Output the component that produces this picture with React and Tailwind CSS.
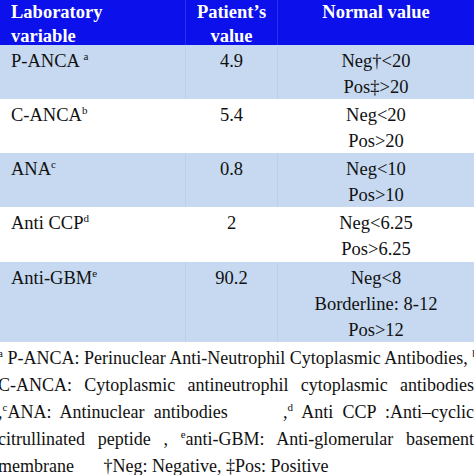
import React from 'react';

const rows = [
  { name: 'P-ANCA', gap: true, sup: 'a', value: '4.9', normal: ['Neg†<20', 'Pos‡>20'], blue: true, h: 'h-[54px]' },
  { name: 'C-ANCA', sup: 'b', value: '5.4', normal: ['Neg<20', 'Pos>20'], h: 'h-[54px]' },
  { name: 'ANA', sup: 'c', value: '0.8', normal: ['Neg<10', 'Pos>10'], blue: true, h: 'h-[54px]' },
  { name: 'Anti CCP', sup: 'd', value: '2', normal: ['Neg<6.25', 'Pos>6.25'], h: 'h-[55px]' },
  { name: 'Anti-GBM', sup: 'e', value: '90.2', normal: ['Neg<8', 'Borderline: 8-12', 'Pos>12'], blue: true, h: 'h-[80px]' },
];

function Sup({ children }) {
  return <sup className="text-[11px] top-[-7px]">{children}</sup>;
}

export default function App() {
  return (
    <div className="w-[474px] h-[475px] overflow-hidden bg-white text-[#111] [--font-serif:Liberation_Serif,Times_New_Roman,serif] font-serif">
      {/* ── Table ── */}
      <div className="grid grid-cols-[186px_92px_196px] text-[18.5px] leading-[26px]">
        {/* header */}
        <div className="h-[45px] bg-[#0c10ea] text-white font-bold pl-[11px] leading-[24px] border-r border-[#2a30ee]">
          Laboratory<br />variable
        </div>
        <div className="h-[45px] bg-[#0c10ea] text-white font-bold text-center leading-[24px] border-r border-[#2a30ee]">
          Patient&rsquo;s<br />value
        </div>
        <div className="h-[45px] bg-[#0c10ea] text-white font-bold text-center leading-[24px]">
          Normal value
        </div>

        {rows.map(r => {
          const bg = r.blue ? 'bg-[#c6d9f0]' : 'bg-white';
          const line = r.blue ? 'border-[#bccfe7]' : 'border-white';
          return (
            <React.Fragment key={r.name}>
              <div className={`${r.h} ${bg} ${line} border-r pl-[11px] pt-[3px]`}>
                {r.name}{r.gap ? ' ' : ''}<Sup>{r.sup}</Sup>
              </div>
              <div className={`${r.h} ${bg} ${line} border-r text-center pt-[3px]`}>{r.value}</div>
              <div className={`${r.h} ${bg} text-center pt-[3px]`}>
                {r.normal.map(n => <div key={n}>{n}</div>)}
              </div>
            </React.Fragment>
          );
        })}
      </div>

      {/* ── Footnote ── */}
      <div className="w-[476px] -ml-[2px] pt-[3px] text-[18px] leading-[27px] whitespace-nowrap">
        <div className="text-justify [text-align-last:justify]">
          <Sup>a</Sup> P-ANCA: Perinuclear Anti-Neutrophil Cytoplasmic Antibodies, <Sup>b</Sup>
        </div>
        <div className="text-justify [text-align-last:justify]">
          C-ANCA: Cytoplasmic antineutrophil cytoplasmic antibodies
        </div>
        <div className="text-justify [text-align-last:justify]">
          ,<Sup>c</Sup>ANA: Antinuclear antibodies&nbsp;&nbsp;&nbsp;&nbsp;&nbsp; ,<Sup>d</Sup> Anti CCP :Anti–cyclic
        </div>
        <div className="text-justify [text-align-last:justify]">
          citrullinated peptide , <Sup>e</Sup>anti-GBM: Anti-glomerular basement
        </div>
        <div>
          membrane<span className="inline-block w-[25px]" /> †Neg: Negative, ‡Pos: Positive
        </div>
      </div>
    </div>
  );
}
